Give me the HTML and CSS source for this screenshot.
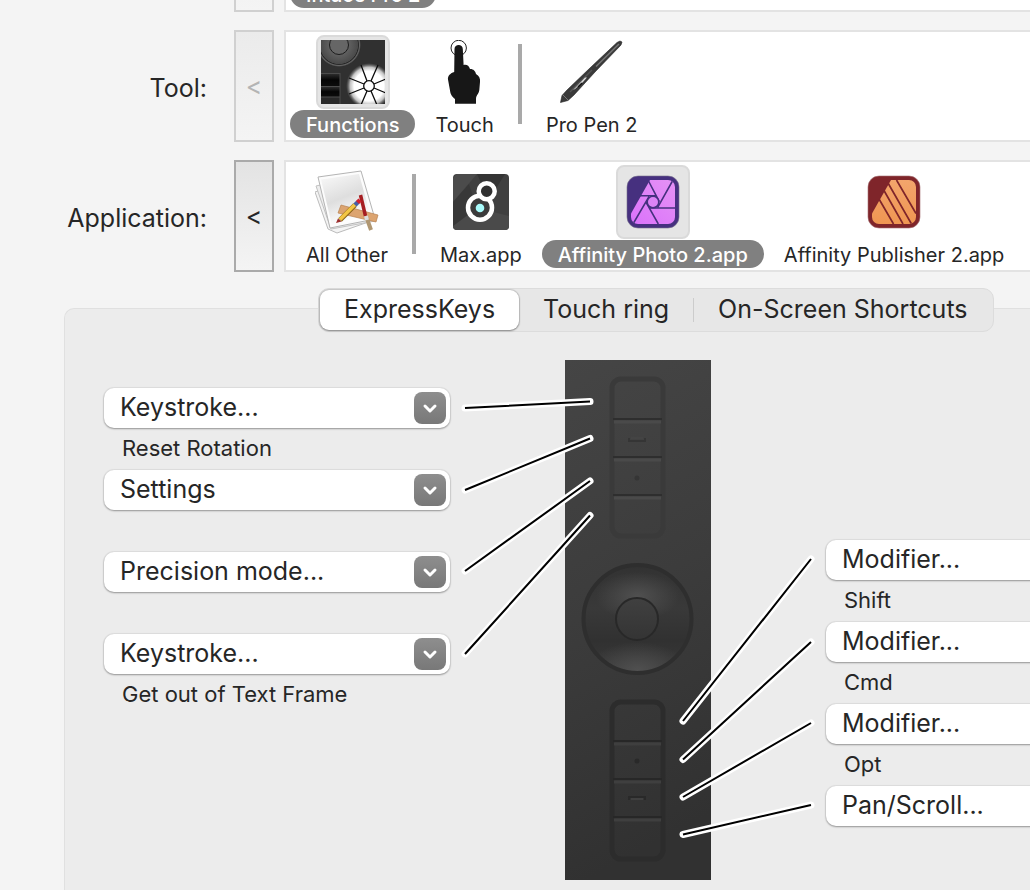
FILE: index.html
```html
<!DOCTYPE html>
<html lang="en">
<head>
<meta charset="utf-8">
<title>Tablet Preferences</title>
<link rel="stylesheet" href="styles.css">
</head>
<body>
<main class="prefs">
  <section class="row row-scrolled" aria-label="Device">
    <span class="row-label"></span>
    <button class="scroll" disabled aria-label="Previous device"></button>
    <div class="strip"><button class="item selected"><span class="icon"></span><span class="name">Intuos Pro 2</span></button></div>
  </section>

  <section class="row" aria-label="Tool">
    <span class="row-label">Tool:</span>
    <button class="scroll" disabled>&lt;</button>
    <div class="strip">
      <button class="item selected">
        <span class="icon">
          <svg viewBox="0 0 64 64" width="64" height="64">
            <defs>
              <radialGradient id="glow"><stop offset=".65" stop-color="#fff"/><stop offset=".82" stop-color="#ddd" stop-opacity=".85"/><stop offset="1" stop-color="#777" stop-opacity="0"/></radialGradient>
              <radialGradient id="dial"><stop offset=".45" stop-color="#606060"/><stop offset=".85" stop-color="#4a4a4a"/><stop offset=".88" stop-color="#222"/><stop offset=".93" stop-color="#666"/><stop offset="1" stop-color="#2a2a2a"/></radialGradient>
              <linearGradient id="key" x2="0" y2="1"><stop stop-color="#2c2c2c"/><stop offset=".5" stop-color="#050505"/><stop offset="1" stop-color="#0c0c0c"/></linearGradient>
              <clipPath id="tile"><path d="M0 0h64v64H0z"/></clipPath>
            </defs>
            <g clip-path="url(#tile)">
              <path d="M0 0h64v64H0z" fill="#303030"/>
              <circle cx="18" cy="5" r="22" fill="url(#dial)"/>
              <circle cx="18" cy="5" r="9.500" fill="#666" stroke="#1c1c1c"/>
              <path d="M0 33h19.500v31H0z" fill="#4c4c4c"/>
              <path d="M0 34h18.500v12H0z" fill="url(#key)"/><path d="M0 47h18.500v9.500H0z" fill="url(#key)"/><path d="M0 57.500h18.500V64H0z" fill="#292929"/>
              <circle cx="48" cy="46" r="23" fill="url(#glow)"/>
              <g fill="none" stroke="#0b0b0b" stroke-width="1.300">
                <circle cx="48" cy="46" r="5.300"/>
                <path d="M46 41 40 25M50 41l7-16M43 44l-15-6M43 48l-15 6M46 51l-6 14M50 51l6 14M53 44l12-5M53 48l12 5"/>
              </g>
            </g>
          </svg>
        </span>
        <span class="name">Functions</span>
      </button>
      <button class="item">
        <span class="icon">
          <svg viewBox="0 0 64 64" width="64" height="64">
            <circle cx="25.700" cy="8" r="7.700" fill="#fff" stroke="#222" stroke-width="1"/>
            <path d="M21.500 9c0-5.500 8.300-5.500 8.300 0l.8 16c3-.8 5.500.8 6.400 4 3-.3 5.500 2 6 5 3 1.500 4.500 4.500 4 8l-.7 8c-.3 4-3.300 5-3.300 9v4.700H22V59c-3.500-3-4.500-5-5-8.500L15 39.500c-.5-3.500 2.500-6.500 6.200-7.500z" fill="#171717"/>
          </svg>
        </span>
        <span class="name">Touch</span>
      </button>
      <span class="divider"></span>
      <button class="item">
        <span class="icon">
          <svg viewBox="0 0 64 64" width="64" height="64">
            <path d="M.5 62.500 2 55.500 7 50 31 27 57 2.500 60 1l2 1-1 3-26 27-21 23-6 5.500z" fill="#3a3a3a" stroke="#222" stroke-width=".6"/>
            <path d="M59 4 36 26.500" stroke="#777" stroke-width="1.500"/>
            <path d="M32 30 10 52" stroke="#555" stroke-width="1.500"/>
            <path d="m13 50 5-5 7-7.500 2 0-4 4.500-8 7z" fill="#ddd"/>
            <path d="m18 47 4-4" stroke="#111" stroke-width="1.500"/>
            <path d="m3 55 5 5" stroke="#888" stroke-width=".8"/>
          </svg>
        </span>
        <span class="name">Pro Pen 2</span>
      </button>
    </div>
  </section>

  <section class="row" aria-label="Application">
    <span class="row-label">Application:</span>
    <button class="scroll">&lt;</button>
    <div class="strip">
      <button class="item">
        <span class="icon">
          <svg viewBox="0 0 64 64" width="64" height="64">
            <defs><linearGradient id="sheet" x2=".4" y2="1"><stop stop-color="#fafafa"/><stop offset=".55" stop-color="#dedede"/><stop offset="1" stop-color="#fff"/></linearGradient></defs>
            <path d="M0 22 38 8l21 42-37 13-9-4z" fill="#f4f4f4" stroke="#bbb"/>
            <path d="m1 16 42-10 17 45-44 8z" fill="#eee" stroke="#c2c2c2"/>
            <path d="m3 7 43-6 14 48-45 9z" fill="#fcfcfc" stroke="#b4b4b4"/>
            <path d="m6 9.500 38-5.500 12 43-39 8z" fill="url(#sheet)"/>
            <path d="m26 35 37 10-2 7-38-9z" fill="#dca470" stroke="#b78150" stroke-width=".7"/>
            <path d="m45.500 25 5 21" stroke="#a51e22" stroke-width="3.500"/>
            <path d="m51 46 5 14" stroke="#b09772" stroke-width="4"/>
            <path d="m51 46 1 4" stroke="#ddd" stroke-width="4"/>
            <path d="M25 50 40 35" stroke="#8a6418" stroke-width="5"/>
            <path d="M25 49.500 40 34.500" stroke="#f3c544" stroke-width="3.500"/>
            <path d="m40 35 3-3" stroke="#4561a5" stroke-width="4.500"/>
            <path d="m42.500 32.500 2.500-2.500" stroke="#d32130" stroke-width="4.500"/>
            <path d="m21 53 2-4.500 3.500 3z" fill="#9b2d2d"/>
          </svg>
        </span>
        <span class="name">All Other</span>
      </button>
      <span class="divider"></span>
      <button class="item">
        <span class="icon">
          <svg viewBox="0 0 64 64" width="64" height="64">
            <rect x="4" y="4" width="56" height="56" rx="4" fill="#404040"/>
            <path d="M8 4h20L4 32V8z" fill="#4b4b4b"/><path d="M28 4h28L40 30z" fill="#343434"/><path d="M4 56 28 38l32 8v10q0 4-4 4H8q-4 0-4-4z" fill="#4a4a4a"/><path d="m4 32 16-18 8 24L4 56z" fill="#383838"/>
            <circle cx="31" cy="37.700" r="12" fill="#3b3b3b" stroke="#fff" stroke-width="4.500"/>
            <circle cx="37.700" cy="21.300" r="8" fill="#303030" stroke="#fff" stroke-width="4.500"/>
            <circle cx="31" cy="38" r="4.300" fill="#a9fbfb"/>
          </svg>
        </span>
        <span class="name">Max.app</span>
      </button>
      <button class="item selected">
        <span class="icon">
          <svg viewBox="0 0 64 64" width="64" height="64">
            <defs>
              <linearGradient id="pink" x1="1" x2="0" y2="1"><stop stop-color="#e592f5"/><stop offset="1" stop-color="#da70fb"/></linearGradient>
              <clipPath id="face"><rect x="10" y="10" width="44" height="44" rx="7"/></clipPath>
            </defs>
            <rect x="6" y="6" width="52" height="52" rx="11" fill="#46307f" stroke="#77708c" stroke-width=".6"/>
            <g clip-path="url(#face)">
              <path d="M29 10h25v44H4z" fill="url(#pink)"/>
              <g fill="none" stroke="#46307f" stroke-width="1.600">
                <path d="m27.500 11 10.800 20.700M52 10 36.700 37.300M54 38H28.300M37.300 54 24.700 31.700M12 54l16-27.300M18 25.700h17"/>
                <circle cx="32" cy="32" r="5.800" fill="#dc83f5"/>
              </g>
            </g>
          </svg>
        </span>
        <span class="name">Affinity Photo 2.app</span>
      </button>
      <button class="item">
        <span class="icon">
          <svg viewBox="0 0 64 64" width="64" height="64">
            <defs><linearGradient id="orange" x2="0" y2="1"><stop stop-color="#f3a56c"/><stop offset="1" stop-color="#ef9652"/></linearGradient></defs>
            <rect x="6" y="6" width="52" height="52" rx="11" fill="#7f252a" stroke="#a47174" stroke-width=".6"/>
            <g clip-path="url(#face)">
              <path d="M29 10h25v44H4z" fill="url(#orange)"/>
              <path d="M34.500 10 54 43.500M26 13l23.500 41M21.700 20 41 54M17 29l14.500 25" fill="none" stroke="#7f252a" stroke-width="1.700"/>
            </g>
          </svg>
        </span>
        <span class="name">Affinity Publisher 2.app</span>
      </button>
    </div>
  </section>

  <div class="tabs" role="tablist">
    <button class="tab active" role="tab" aria-selected="true">ExpressKeys</button>
    <button class="tab" role="tab">Touch ring</button>
    <span class="tab-rule"></span>
    <button class="tab" role="tab">On-Screen Shortcuts</button>
  </div>

  <section class="panel">
    <div class="keys keys-left">
      <div class="field">
        <div class="picker"><select aria-label="Key 1"><option>Keystroke...</option></select><svg class="chevron" viewBox="0 0 32 32"><path d="m11 14 5 5 5-5"/></svg></div>
        <span class="caption">Reset Rotation</span>
      </div>
      <div class="field">
        <div class="picker"><select aria-label="Key 2"><option>Settings</option></select><svg class="chevron" viewBox="0 0 32 32"><path d="m11 14 5 5 5-5"/></svg></div>
        <span class="caption"></span>
      </div>
      <div class="field">
        <div class="picker"><select aria-label="Key 3"><option>Precision mode...</option></select><svg class="chevron" viewBox="0 0 32 32"><path d="m11 14 5 5 5-5"/></svg></div>
        <span class="caption"></span>
      </div>
      <div class="field">
        <div class="picker"><select aria-label="Key 4"><option>Keystroke...</option></select><svg class="chevron" viewBox="0 0 32 32"><path d="m11 14 5 5 5-5"/></svg></div>
        <span class="caption">Get out of Text Frame</span>
      </div>
    </div>

    <svg class="device" viewBox="0 0 376 520" width="376" height="520" role="img" aria-label="Tablet keys">
      <defs>
        <linearGradient id="body" x2=".15" y2="1"><stop stop-color="#454545"/><stop offset=".5" stop-color="#3c3c3c"/><stop offset="1" stop-color="#313131"/></linearGradient>
        <radialGradient id="shine"><stop stop-color="#505050"/><stop offset="1" stop-color="#505050" stop-opacity="0"/></radialGradient>
        <linearGradient id="bowl" x2="0" y2="1"><stop stop-color="#323232"/><stop offset=".4" stop-color="#393939"/><stop offset=".7" stop-color="#313131"/><stop offset="1" stop-color="#3a3a3a"/></linearGradient>
        <linearGradient id="hub" x2="0" y2="1"><stop stop-color="#404040"/><stop offset="1" stop-color="#343434"/></linearGradient>
        <clipPath id="wheel"><circle cx="187.500" cy="259" r="53"/></clipPath>
      </defs>
      <path d="M115 0h146v520H115z" fill="url(#body)"/>
      <g fill="none" stroke-width="5">
        <rect x="162" y="19" width="51" height="157" rx="9" stroke="#3a3a3a"/>
        <rect x="162" y="342" width="51" height="157" rx="9" stroke="#2c2c2c"/>
      </g>
      <g fill="none" stroke-width="2">
        <path d="M163 59h49M163 97h49M163 135h49" stroke="#2e2e2e"/>
        <path d="M164 62h47M164 100h47M164 138h47" stroke="#4a4a4a" stroke-width="3"/>
        <path d="M163 381h49M163 419h49M163 457h49" stroke="#272727"/>
        <path d="M164 384h47M164 422h47M164 460h47" stroke="#3f3f3f" stroke-width="3"/>
        <path d="M179 78v3h16v-3" stroke="#353535"/><path d="M181 78h12" stroke="#484848" stroke-width="1"/>
        <path d="M179 440v-3h16v3" stroke="#292929"/><path d="M181 439h12" stroke="#404040"/>
      </g>
      <circle cx="187" cy="118" r="2.500" fill="#353535"/><circle cx="187" cy="401" r="2.500" fill="#292929"/>
      <circle cx="187.500" cy="259" r="54" fill="url(#bowl)"/>
      <g clip-path="url(#wheel)">
        <ellipse cx="187.500" cy="236" rx="42" ry="24" fill="url(#shine)"/>
        <ellipse cx="187.500" cy="310" rx="50" ry="28" fill="url(#shine)"/>
      </g>
      <circle cx="187.500" cy="259" r="54" fill="none" stroke="#2e2e2e" stroke-width="4"/>
      <circle cx="187" cy="259" r="21" fill="url(#hub)" stroke="#282828" stroke-width="2"/>
      <path d="M15 48 140 41.500M15 130 140 78.500M15 211 140 121M15 294 140 155.500M233 361 361 199M233 399.500 361 282M233 437 361 363M233 474.500 361 445" fill="none" stroke="#fff" stroke-width="7" stroke-linecap="round"/>
      <path d="M15 48 140 41.500M15 130 140 78.500M15 211 140 121M15 294 140 155.500M233 361 361 199M233 399.500 361 282M233 437 361 363M233 474.500 361 445" fill="none" stroke="#000" stroke-width="2"/>
    </svg>

    <div class="keys keys-right">
      <div class="field">
        <div class="picker"><select aria-label="Key 5"><option>Modifier...</option></select><svg class="chevron" viewBox="0 0 32 32"><path d="m11 14 5 5 5-5"/></svg></div>
        <span class="caption">Shift</span>
      </div>
      <div class="field">
        <div class="picker"><select aria-label="Key 6"><option>Modifier...</option></select><svg class="chevron" viewBox="0 0 32 32"><path d="m11 14 5 5 5-5"/></svg></div>
        <span class="caption">Cmd</span>
      </div>
      <div class="field">
        <div class="picker"><select aria-label="Key 7"><option>Modifier...</option></select><svg class="chevron" viewBox="0 0 32 32"><path d="m11 14 5 5 5-5"/></svg></div>
        <span class="caption">Opt</span>
      </div>
      <div class="field">
        <div class="picker"><select aria-label="Key 8"><option>Pan/Scroll...</option></select><svg class="chevron" viewBox="0 0 32 32"><path d="m11 14 5 5 5-5"/></svg></div>
        <span class="caption"></span>
      </div>
    </div>
  </section>
</main>
</body>
</html>
```
FILE: styles.css
```css
* { box-sizing: border-box; }
body {
  margin: 0;
  background: #f4f4f4;
  color: #262626;
  font-family: Inter, "Liberation Sans", sans-serif;
  font-size: 25px;
}
button, select { font: inherit; color: inherit; }
button { border: 0; padding: 0; background: none; }

.prefs {
  display: flex;
  flex-direction: column;
  min-height: 100vh;
  overflow: hidden;
}

.row {
  display: grid;
  grid-template-columns: 224px 40px minmax(0, 1fr);
  column-gap: 10px;
  height: 112px;
  margin-bottom: 18px;
}
/* The device row is mostly scrolled out above the window. */
.row-scrolled { margin-top: -100px; }
.row-label {
  align-self: center;
  padding: 4px 17px 0 0;
  text-align: right;
  line-height: 32px;
}
.scroll {
  border: 2px solid #aaa;
  background: linear-gradient(#e3e3e3, #f4f4f4);
}
.scroll:disabled {
  border-color: #d0d0d0;
  background: linear-gradient(#ebebeb, #f4f4f4);
  color: #b4b4b4;
}
.strip {
  display: flex;
  gap: 4px;
  border: 2px solid #e3e3e3;
  border-right: 0;
  background: #fff;
  padding: 3px 4px 2px;
  overflow: hidden;
}
.item {
  display: flex;
  flex-direction: column;
  align-items: center;
  flex: none;
  gap: 1px;
  font-size: 20px;
}
.icon {
  display: grid;
  place-items: center;
  width: 74px;
  height: 74px;
  border: 2px solid transparent;
  border-radius: 8px;
}
.selected .icon { border-color: #dadada; background: #e5e5e5; }
.name {
  padding: 2px 16px 0;
  border-radius: 14px;
  line-height: 26px;
  white-space: nowrap;
}
.selected .name { background: #808080; color: #fff; font-weight: 500; }
.divider {
  flex: none;
  width: 4px;
  height: 80px;
  margin: 9px 4px 0;
  background: #a9a9a9;
}

.tabs {
  display: flex;
  align-items: center;
  align-self: flex-start;
  margin: -2px 0 -24px 318px;
  height: 44px;
  padding: 1px;
  border: 1px solid #dcdcdc;
  border-radius: 11px;
  background: #e7e7e7;
  z-index: 1;
}
.tab { height: 40px; padding: 0 24px 2px; white-space: nowrap; }
.tab.active {
  border-radius: 9px;
  background: #fff;
  box-shadow: 0 0 1px 1px #0002, 0 1px 2px #0005;
}
.tab-rule { width: 1px; height: 24px; background: #ccc; }

.panel {
  display: flex;
  flex: 1;
  align-items: flex-start;
  margin-left: 64px;
  padding: 51px 0 10px 39px;
  border: 1px solid #e0e0e0;
  border-right: 0;
  border-bottom: 0;
  border-top-left-radius: 10px;
  background: #ececec;
}
.keys { flex: 0 0 346px; }
.keys-left { padding-top: 28px; }
.keys-right { padding-top: 180px; }
.device { flex: none; }
.field { height: 82px; }
.picker { display: grid; align-items: center; }
.picker > * { grid-area: 1 / 1; }
.picker select {
  appearance: none;
  width: 100%;
  height: 40px;
  padding: 0 48px 2px 16px;
  border: 0;
  border-radius: 10px;
  background: #fff;
  box-shadow: 0 0 1px 1px #0000000f, 0 1px 2px #0005;
}
.chevron {
  justify-self: end;
  width: 32px;
  height: 32px;
  margin-right: 4px;
  border-radius: 8px;
  background: linear-gradient(#8e8e8e, #787878);
  fill: none;
  stroke: #fff;
  stroke-width: 3;
  stroke-linecap: round;
  stroke-linejoin: round;
  pointer-events: none;
}
.caption {
  display: block;
  padding-left: 18px;
  font-size: 22px;
  line-height: 40px;
}
```
